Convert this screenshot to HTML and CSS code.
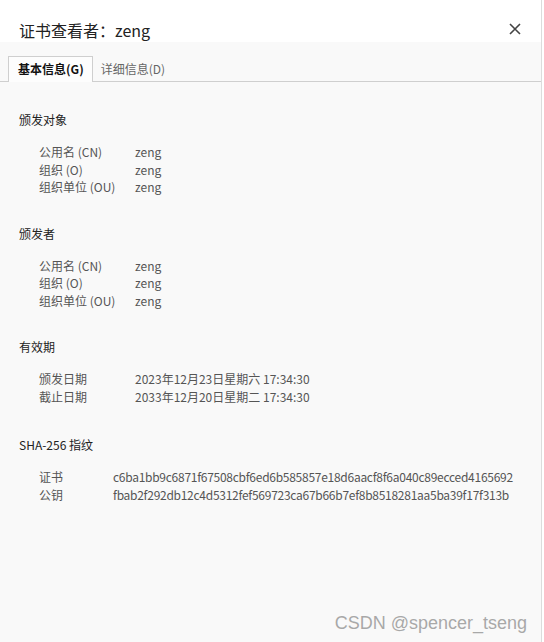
FILE: index.html
```html
<!DOCTYPE html>
<html lang="zh-CN">
<head>
    <meta charset="UTF-8">
    <meta name="viewport" content="width=device-width, initial-scale=1.0">
    <title>证书查看者：zeng</title>
    <link rel="stylesheet" href="styles.css">
</head>
<body>

    <div class="dialog">
        <div class="titlebar">
            <h1 class="title">证书查看者：zeng</h1>
            <button class="close" aria-label="关闭">
                <svg width="12" height="12" viewBox="0 0 12 12">
                    <path d="M1 1 L11 11 M11 1 L1 11" stroke="#444" stroke-width="1.6" fill="none"/>
                </svg>
            </button>
        </div>

        <div class="tabs">
            <div class="tab active">基本信息(G)</div>
            <div class="tab">详细信息(D)</div>
        </div>

        <div class="content">
            <div class="section">
                <h2>颁发对象</h2>
                <div class="rows">
                    <span>公用名 (CN)</span><span>zeng</span>
                    <span>组织 (O)</span><span>zeng</span>
                    <span>组织单位 (OU)</span><span>zeng</span>
                </div>
            </div>

            <div class="section">
                <h2>颁发者</h2>
                <div class="rows">
                    <span>公用名 (CN)</span><span>zeng</span>
                    <span>组织 (O)</span><span>zeng</span>
                    <span>组织单位 (OU)</span><span>zeng</span>
                </div>
            </div>

            <div class="section">
                <h2>有效期</h2>
                <div class="rows">
                    <span>颁发日期</span><span>2023年12月23日星期六 17:34:30</span>
                    <span>截止日期</span><span>2033年12月20日星期二 17:34:30</span>
                </div>
            </div>

            <div class="section sha">
                <h2>SHA-256 指纹</h2>
                <div class="rows narrow">
                    <span>证书</span><span class="hash">c6ba1bb9c6871f67508cbf6ed6b585857e18d6aacf8f6a040c89ecced4165692</span>
                    <span>公钥</span><span class="hash">fbab2f292db12c4d5312fef569723ca67b66b7ef8b8518281aa5ba39f17f313b</span>
                </div>
            </div>
        </div>

        <div class="watermark">CSDN @spencer_tseng</div>
    </div>

</body>
</html>
```

FILE: styles.css
```css
body {
    margin: 0;
    background: #fff;
    font-family: "Noto Sans CJK SC", "Noto Sans", sans-serif;
    color: #222;
}

.dialog {
    position: relative;
    width: 541px;
    height: 642px;
    border-right: 1px solid #dcdcdc;
    background: #f9f9f9;
    overflow: hidden;
}

.titlebar {
    height: 42px;
    box-sizing: border-box;
    padding: 20px 20px 0 19px;
    background: #fff;
    display: flex;
    align-items: flex-start;
    justify-content: space-between;
}

.title {
    margin: 0;
    font-size: 16px;
    font-weight: normal;
    line-height: 20px;
    color: #222;
}

.close {
    border: none;
    background: none;
    padding: 0;
    margin-top: 3px;
    width: 12px;
    height: 12px;
    display: flex;
}

.tabs {
    display: flex;
    padding: 14px 0 0 8px;
    border-bottom: 1px solid #cfcfcf;
}

.tab {
    font-size: 12px;
    line-height: 24px;
    padding: 1px 8px 0 8px;
    color: #666;
}

.tab.active {
    background: #fdfdfd;
    border: 1px solid #cfcfcf;
    border-bottom: none;
    margin-bottom: -1px;
    padding: 0 8px 1px 9px;
    font-weight: bold;
    color: #111;
}

.content {
    padding: 29px 19px 0 19px;
}

.section + .section {
    margin-top: 29px;
}

.section.sha {
    margin-top: 31px;
}

.section h2 {
    margin: 0 0 14px 0;
    font-size: 12px;
    font-weight: normal;
    line-height: 18px;
    color: #222;
}

.rows {
    display: grid;
    grid-template-columns: 96px auto;
    padding-left: 20px;
    font-size: 12px;
    line-height: 17.5px;
    color: #555;
}

.rows.narrow {
    grid-template-columns: 74px auto;
}

.hash {
    letter-spacing: -0.27px;
}

.watermark {
    position: absolute;
    right: 14px;
    bottom: 8px;
    font-family: "Liberation Sans", Arial, sans-serif;
    font-size: 18px;
    color: #a8a8a8;
    text-shadow: 0 0 1px #fff;
}
```
